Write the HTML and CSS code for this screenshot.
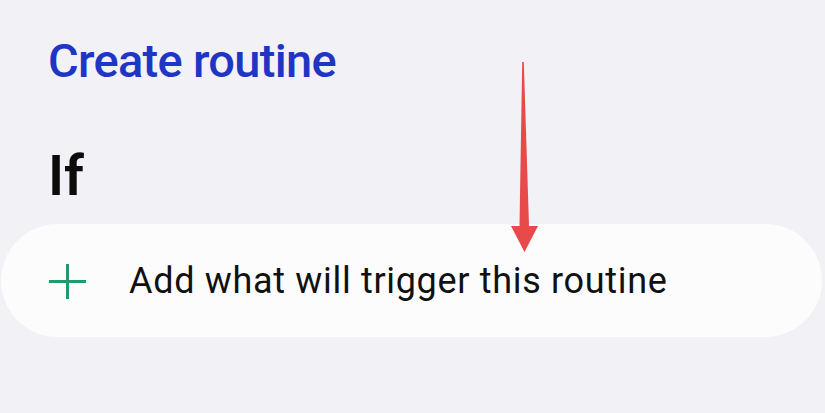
FILE: index.html
```html
<!DOCTYPE html>
<html lang="en">
<head>
<meta charset="utf-8">
<title>Create routine</title>
<link rel="stylesheet" href="styles.css">
</head>
<body>
<main class="screen">
  <h1 class="title">Create routine</h1>
  <h2 class="section">If</h2>
  <div class="card">
    <svg class="plus" width="38" height="36" viewBox="0 0 38 36" aria-hidden="true">
      <path d="M0 17.5H37M18.5 0V35" stroke="#249a6c" stroke-width="3" fill="none"/>
    </svg>
    <span class="card-text">Add what will trigger this routine</span>
  </div>
  <svg class="arrow" width="44" height="200" viewBox="0 0 44 200" aria-hidden="true">
    <path d="M26.2 2 L27.8 2 L33 166 L42 166 L28.5 192 L15 166 L23.5 166 Z" fill="#e84a4a"/>
  </svg>
</main>
</body>
</html>
```
FILE: styles.css
```css
html, body {
  margin: 0;
  padding: 0;
  background: #f1f1f6;
}
.screen {
  position: relative;
  width: 825px;
  height: 413px;
  overflow: hidden;
  display: flex;
  flex-direction: column;
  font-family: Roboto, "Noto Sans", sans-serif;
}
.title {
  margin: 37px 0 0 48px;
  font-size: 47px;
  line-height: 48px;
  font-weight: 500;
  letter-spacing: -0.7px;
  color: #1f35c4;
}
.section {
  margin: 63px 0 0 48px;
  font-size: 56px;
  line-height: 56px;
  font-weight: 600;
  color: #0c0c0c;
}
.card {
  margin: 20px 3px 0 1px;
  height: 113px;
  border-radius: 57px;
  background: #fcfcfd;
  display: flex;
  align-items: center;
  padding-left: 48px;
  gap: 42px;
}
.plus {
  flex: none;
  margin-top: 2px;
}
.card-text {
  font-size: 36px;
  letter-spacing: 0.68px;
  color: #111111;
  font-weight: 400;
}
.arrow {
  position: absolute;
  left: 496px;
  top: 60px;
}
```
